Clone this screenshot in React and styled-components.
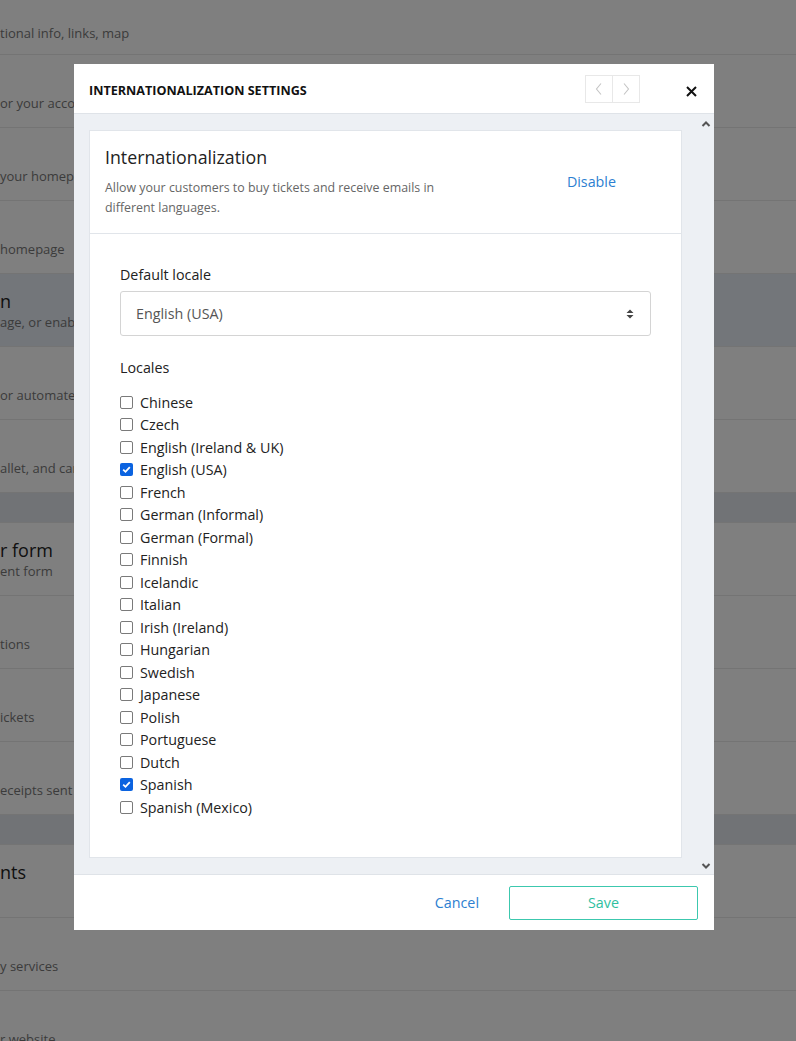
import React from "react"
import styled, { createGlobalStyle } from "styled-components"

const GlobalStyle = createGlobalStyle`
  html, body {
    margin: 0;
    padding: 0;
    background: #ffffff;
    font-family: "Open Sans", "Noto Sans", sans-serif;
    overflow: hidden;
  }
`

const bgRows = [
  { title: "", sub: "tional info, links, map", first: true },
  { title: "", sub: "or your accou" },
  { title: "", sub: "your homepa" },
  { title: "", sub: " homepage" },
  { title: "n", sub: "age, or enab", active: true },
  { title: "", sub: "or automated" },
  { title: "", sub: "allet, and can" },
  { band: true },
  { title: "r form", sub: "ent form" },
  { title: "", sub: "tions" },
  { title: "", sub: "ickets" },
  { title: "", sub: "eceipts sent" },
  { band: true },
  { title: "nts", sub: "" },
  { title: "", sub: "y services" },
  { title: "", sub: "r website" },
]

const locales = [
  ["Chinese", false],
  ["Czech", false],
  ["English (Ireland & UK)", false],
  ["English (USA)", true],
  ["French", false],
  ["German (Informal)", false],
  ["German (Formal)", false],
  ["Finnish", false],
  ["Icelandic", false],
  ["Italian", false],
  ["Irish (Ireland)", false],
  ["Hungarian", false],
  ["Swedish", false],
  ["Japanese", false],
  ["Polish", false],
  ["Portuguese", false],
  ["Dutch", false],
  ["Spanish", true],
  ["Spanish (Mexico)", false],
]

export default function App () {
  return (
    <>
      <GlobalStyle />
      <Page>
        {bgRows.map((row, index) => {
          if (row.band) return <Band key={index} />
          return (
            <BgRow key={index} first={row.first} active={row.active}>
              <BgTitle>{row.title || "\u00a0"}</BgTitle>
              <BgSub>{row.sub || "\u00a0"}</BgSub>
            </BgRow>
          )
        })}
      </Page>
      <Backdrop />
      <Modal>
        <Header>
          <HeaderTitle>Internationalization Settings</HeaderTitle>
          <NavGroup>
            <NavButton>
              <svg width="10" height="14" viewBox="0 0 10 14">
                <path d="M7 1.5 L2.5 7 L7 12.5" fill="none" stroke="#c4c4c4" strokeWidth="1.1" />
              </svg>
            </NavButton>
            <NavButton>
              <svg width="10" height="14" viewBox="0 0 10 14">
                <path d="M3 1.5 L7.5 7 L3 12.5" fill="none" stroke="#c4c4c4" strokeWidth="1.1" />
              </svg>
            </NavButton>
          </NavGroup>
          <CloseButton>
            <svg width="11" height="11" viewBox="0 0 11 11">
              <path d="M1 1 L10 10 M10 1 L1 10" stroke="#111" strokeWidth="2" />
            </svg>
          </CloseButton>
        </Header>
        <Body>
          <Card>
            <CardHeader>
              <CardIntro>
                <CardTitle>Internationalization</CardTitle>
                <CardText>
                  Allow your customers to buy tickets and receive emails in
                  different languages.
                </CardText>
              </CardIntro>
              <LinkButton>Disable</LinkButton>
            </CardHeader>
            <CardContent>
              <FieldLabel>Default locale</FieldLabel>
              <Select>
                <span>English (USA)</span>
                <svg width="8" height="12" viewBox="0 0 8 12">
                  <path d="M4 1.5 L7.5 5 L0.5 5 Z M4 10.5 L7.5 7 L0.5 7 Z" fill="#444" />
                </svg>
              </Select>
              <FieldLabel spaced>Locales</FieldLabel>
              <CheckList>
                {locales.map(([name, checked]) => (
                  <CheckRow key={name}>
                    <CheckBox checked={checked}>
                      {checked && (
                        <svg width="11" height="11" viewBox="0 0 11 11">
                          <path d="M2.2 5.6 L4.5 7.8 L8.8 3.2" fill="none" stroke="#fff" strokeWidth="1.8" />
                        </svg>
                      )}
                    </CheckBox>
                    {name}
                  </CheckRow>
                ))}
              </CheckList>
            </CardContent>
          </Card>
          <ScrollGutter>
            <svg width="10" height="8" viewBox="0 0 10 8">
              <path d="M1.5 6 L5 2.5 L8.5 6" fill="none" stroke="#555" strokeWidth="2" />
            </svg>
            <svg width="10" height="8" viewBox="0 0 10 8">
              <path d="M1.5 2 L5 5.5 L8.5 2" fill="none" stroke="#555" strokeWidth="2" />
            </svg>
          </ScrollGutter>
        </Body>
        <Footer>
          <LinkButton>Cancel</LinkButton>
          <SaveButton>Save</SaveButton>
        </Footer>
      </Modal>
    </>
  )
}

const Page = styled.div`
  display: flex;
  flex-direction: column;
  margin-top: -18px;
`

const BgRow = styled.div`
  display: flex;
  flex-direction: column;
  height: 73px;
  flex-shrink: 0;
  padding-top: ${props => props.first ? "19px" : "16px"};
  box-sizing: border-box;
  border-bottom: 1px solid #e8e8e8;
  background: ${props => props.active ? "#e6ecf4" : "#ffffff"};
  white-space: nowrap;
  overflow: hidden;
`

const BgTitle = styled.div`
  font-size: 18px;
  line-height: 22px;
  color: #222;
`

const BgSub = styled.div`
  font-size: 13px;
  line-height: 20px;
  color: #777;
`

const Band = styled.div`
  height: 30px;
  flex-shrink: 0;
  box-sizing: border-box;
  background: #e3e7ec;
  border-bottom: 1px solid #e8e8e8;
`

const Backdrop = styled.div`
  position: fixed;
  inset: 0;
  background: rgba(0, 0, 0, 0.5);
`

const Modal = styled.div`
  position: fixed;
  left: 74px;
  top: 64px;
  width: 640px;
  height: 866px;
  display: flex;
  flex-direction: column;
  background: #ffffff;
`

const Header = styled.div`
  display: flex;
  align-items: center;
  height: 50px;
  box-sizing: border-box;
  padding: 0 16px 0 15px;
  border-bottom: 1px solid #dfe3e8;
`

const HeaderTitle = styled.h4`
  flex: 1;
  margin: 3px 0 0;
  font-size: 12.6px;
  font-weight: 700;
  text-transform: uppercase;
  color: #111;
`

const NavGroup = styled.div`
  display: flex;
  margin-right: 46px;
`

const NavButton = styled.div`
  width: 28px;
  height: 28px;
  display: flex;
  align-items: center;
  justify-content: center;
  border: 1px solid #e8e8e8;
  box-sizing: border-box;
  & + & {
    border-left: none;
    width: 27px;
  }
`

const CloseButton = styled.div`
  display: flex;
  align-items: center;
  margin-top: 5px;
  margin-right: 1px;
`

const Body = styled.div`
  flex: 1;
  display: flex;
  background: #edf0f4;
  padding: 16px 0 16px 15px;
  min-height: 0;
`

const Card = styled.div`
  width: 593px;
  display: flex;
  flex-direction: column;
  background: #ffffff;
  border: 1px solid #e1e5ea;
  box-sizing: border-box;
`

const CardHeader = styled.div`
  display: flex;
  align-items: center;
  padding: 14px 65px 15px 15px;
  border-bottom: 1px solid #e1e5ea;
`

const CardIntro = styled.div`
  flex: 1;
`

const CardTitle = styled.h3`
  margin: 0 0 9px;
  font-size: 17.8px;
  font-weight: 400;
  line-height: 24px;
  color: #222;
`

const CardText = styled.p`
  margin: 0;
  width: 350px;
  font-size: 12.4px;
  line-height: 20px;
  color: #666;
`

const LinkButton = styled.span`
  font-size: 14.3px;
  color: #2d7fd1;
  cursor: pointer;
`

const CardContent = styled.div`
  display: flex;
  flex-direction: column;
  padding: 31px 30px 0 30px;
`

const FieldLabel = styled.label`
  font-size: 14.3px;
  line-height: 20px;
  color: #222;
  margin-top: ${props => props.spaced ? "22px" : "0"};
  margin-bottom: ${props => props.spaced ? "13px" : "6px"};
`

const Select = styled.div`
  display: flex;
  align-items: center;
  justify-content: space-between;
  height: 45px;
  box-sizing: border-box;
  padding: 0 16px 0 15px;
  border: 1px solid #d4d4d4;
  border-radius: 3px;
  font-size: 14.3px;
  color: #555;
`

const CheckList = styled.div`
  display: flex;
  flex-direction: column;
`

const CheckRow = styled.label`
  display: flex;
  align-items: center;
  height: 22.5px;
  font-size: 14.3px;
  color: #222;
`

const CheckBox = styled.span`
  width: 13px;
  height: 13px;
  box-sizing: border-box;
  margin-right: 7px;
  display: flex;
  align-items: center;
  justify-content: center;
  border-radius: 2px;
  border: ${props => props.checked ? "none" : "1.5px solid #7a7a7a"};
  background: ${props => props.checked ? "#0b63e0" : "#ffffff"};
`

const ScrollGutter = styled.div`
  width: 16px;
  margin-left: 16px;
  margin-top: -10px;
  margin-bottom: -12px;
  display: flex;
  flex-direction: column;
  justify-content: space-between;
  align-items: center;
`

const Footer = styled.div`
  display: flex;
  align-items: center;
  justify-content: flex-end;
  gap: 30px;
  height: 56px;
  box-sizing: border-box;
  padding: 0 16px;
  border-top: 1px solid #dfe3e8;
`

const SaveButton = styled.button`
  width: 189px;
  height: 34px;
  background: #ffffff;
  border: 1px solid #3cc8ae;
  border-radius: 2px;
  font-family: inherit;
  font-size: 14.3px;
  color: #2fbf9f;
`
